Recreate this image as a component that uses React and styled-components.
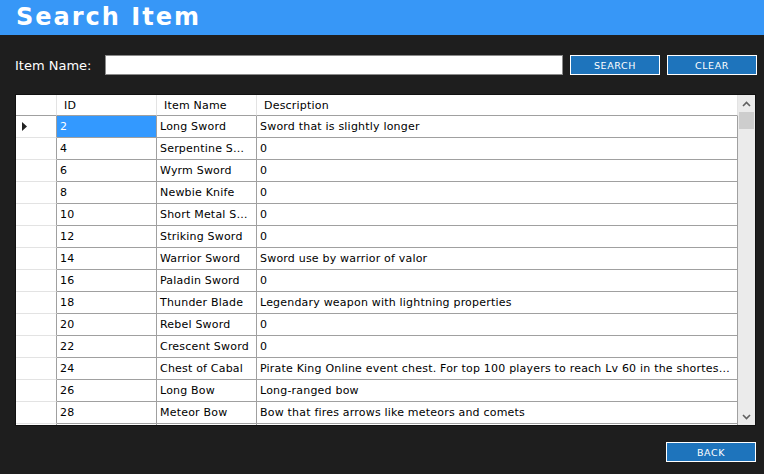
import React from "react";
import styled, { createGlobalStyle } from "styled-components";

const GlobalStyle = createGlobalStyle`
  html, body {
    margin: 0;
    padding: 0;
    background: #1e1e1e;
  }
  body {
    font-family: "DejaVu Sans", Verdana, sans-serif;
  }
`;

const Page = styled.div`
  width: 764px;
  height: 474px;
  background: #1e1e1e;
  display: flex;
  flex-direction: column;
  overflow: hidden;
`;

const TitleBar = styled.div`
  height: 35px;
  background: #3797f7;
  display: flex;
  align-items: center;
  padding-left: 16px;
`;

const Title = styled.h1`
  margin: 0;
  color: #ffffff;
  font-family: "DejaVu Sans", sans-serif;
  font-weight: bold;
  font-size: 24px;
  letter-spacing: 2px;
  line-height: 35px;
`;

const Toolbar = styled.div`
  display: flex;
  align-items: center;
  margin-top: 20px;
  padding-left: 15px;
  height: 20px;
`;

const Label = styled.span`
  color: #ffffff;
  font-size: 13px;
  width: 90px;
`;

const TextBox = styled.input`
  box-sizing: border-box;
  width: 458px;
  height: 20px;
  border: 1px solid #8a8a8a;
  background: #ffffff;
  margin: 0 7px 0 0;
  padding: 0 3px;
`;

const Button = styled.button`
  box-sizing: border-box;
  width: 90px;
  height: 20px;
  margin: 0 ${(p) => p.$gap || 0}px 0 0;
  background: #1e74bc;
  border: 1px solid #ffffff;
  color: #ffffff;
  font-family: "DejaVu Sans", sans-serif;
  font-size: 9.5px;
  letter-spacing: 0.6px;
  padding: 0;
  cursor: pointer;
`;

const Grid = styled.div`
  margin: 19px 0 0 15px;
  width: 741px;
  height: 332px;
  box-sizing: border-box;
  border: 1px solid #111;
  background: #ffffff;
  display: flex;
  overflow: hidden;
`;

const Table = styled.div`
  flex: 1;
  min-width: 0;
  overflow: hidden;
`;

const Row = styled.div`
  display: grid;
  grid-template-columns: 41px 100px 100px 1fr;
  height: ${(p) => (p.$header ? 21 : 22)}px;
  font-size: 11px;
  letter-spacing: 0.2px;
  color: #000;
`;

const HeadCell = styled.div`
  border-right: 1px solid #e3e3e3;
  border-bottom: 1px solid #a0a0a0;
  padding-left: 7px;
  display: flex;
  align-items: center;
  white-space: nowrap;
`;

const RowHead = styled.div`
  border-right: 1px solid #a0a0a0;
  border-bottom: 1px solid #e3e3e3;
  display: flex;
  align-items: center;
  padding-left: 6px;
`;

const Cell = styled.div`
  border-right: 1px solid #a0a0a0;
  border-bottom: 1px solid #a0a0a0;
  padding: 0 3px;
  line-height: 21px;
  white-space: nowrap;
  overflow: hidden;
  text-overflow: ellipsis;
  background: ${(p) => (p.$selected ? "#3399ff" : "#ffffff")};
  color: ${(p) => (p.$selected ? "#ffffff" : "#000000")};
`;

const ScrollBar = styled.div`
  width: 17px;
  background: #ebebeb;
  display: flex;
  flex-direction: column;
  align-items: center;
`;

const ArrowBox = styled.div`
  height: 17px;
  width: 17px;
  display: flex;
  align-items: center;
  justify-content: center;
`;

const Thumb = styled.div`
  width: 15px;
  height: 17px;
  background: #cdcdcd;
`;

const Spacer = styled.div`
  flex: 1;
`;

const Footer = styled.div`
  display: flex;
  justify-content: flex-end;
  padding-right: 8px;
  margin-top: 16px;
`;

const Chevron = ({ up }) => (
  <svg width="9" height="6" viewBox="0 0 9 6">
    <path
      d={up ? "M1 5 L4.5 1.5 L8 5" : "M1 1 L4.5 4.5 L8 1"}
      fill="none"
      stroke="#606060"
      strokeWidth="1.6"
    />
  </svg>
);

const items = [
  ["2", "Long Sword", "Sword that is slightly longer"],
  ["4", "Serpentine Sword", "0"],
  ["6", "Wyrm Sword", "0"],
  ["8", "Newbie Knife", "0"],
  ["10", "Short Metal Sword", "0"],
  ["12", "Striking Sword", "0"],
  ["14", "Warrior Sword", "Sword use by warrior of valor"],
  ["16", "Paladin Sword", "0"],
  ["18", "Thunder Blade", "Legendary weapon with lightning properties"],
  ["20", "Rebel Sword", "0"],
  ["22", "Crescent Sword", "0"],
  [
    "24",
    "Chest of Cabal",
    "Pirate King Online event chest. For top 100 players to reach Lv 60 in the shortest time",
  ],
  ["26", "Long Bow", "Long-ranged bow"],
  ["28", "Meteor Bow", "Bow that fires arrows like meteors and comets"],
  ["30", "", ""],
];

const App = () => {
  return (
    <Page>
      <GlobalStyle />
      <TitleBar>
        <Title>Search Item</Title>
      </TitleBar>
      <Toolbar>
        <Label>Item Name:</Label>
        <TextBox type="text" />
        <Button $gap={7}>SEARCH</Button>
        <Button>CLEAR</Button>
      </Toolbar>
      <Grid>
        <Table>
          <Row $header>
            <HeadCell />
            <HeadCell>ID</HeadCell>
            <HeadCell>Item Name</HeadCell>
            <HeadCell>Description</HeadCell>
          </Row>
          {items.map(([id, name, desc], i) => (
            <Row key={id}>
              <RowHead>
                {i === 0 && (
                  <svg width="5" height="9" viewBox="0 0 5 9">
                    <path d="M0 0 L5 4.5 L0 9 Z" fill="#222" />
                  </svg>
                )}
              </RowHead>
              <Cell $selected={i === 0}>{i === 14 ? "" : id}</Cell>
              <Cell>{name}</Cell>
              <Cell>{desc}</Cell>
            </Row>
          ))}
        </Table>
        <ScrollBar>
          <ArrowBox>
            <Chevron up />
          </ArrowBox>
          <Thumb />
          <Spacer />
          <ArrowBox>
            <Chevron />
          </ArrowBox>
        </ScrollBar>
      </Grid>
      <Footer>
        <Button>BACK</Button>
      </Footer>
    </Page>
  );
};

export default App;
